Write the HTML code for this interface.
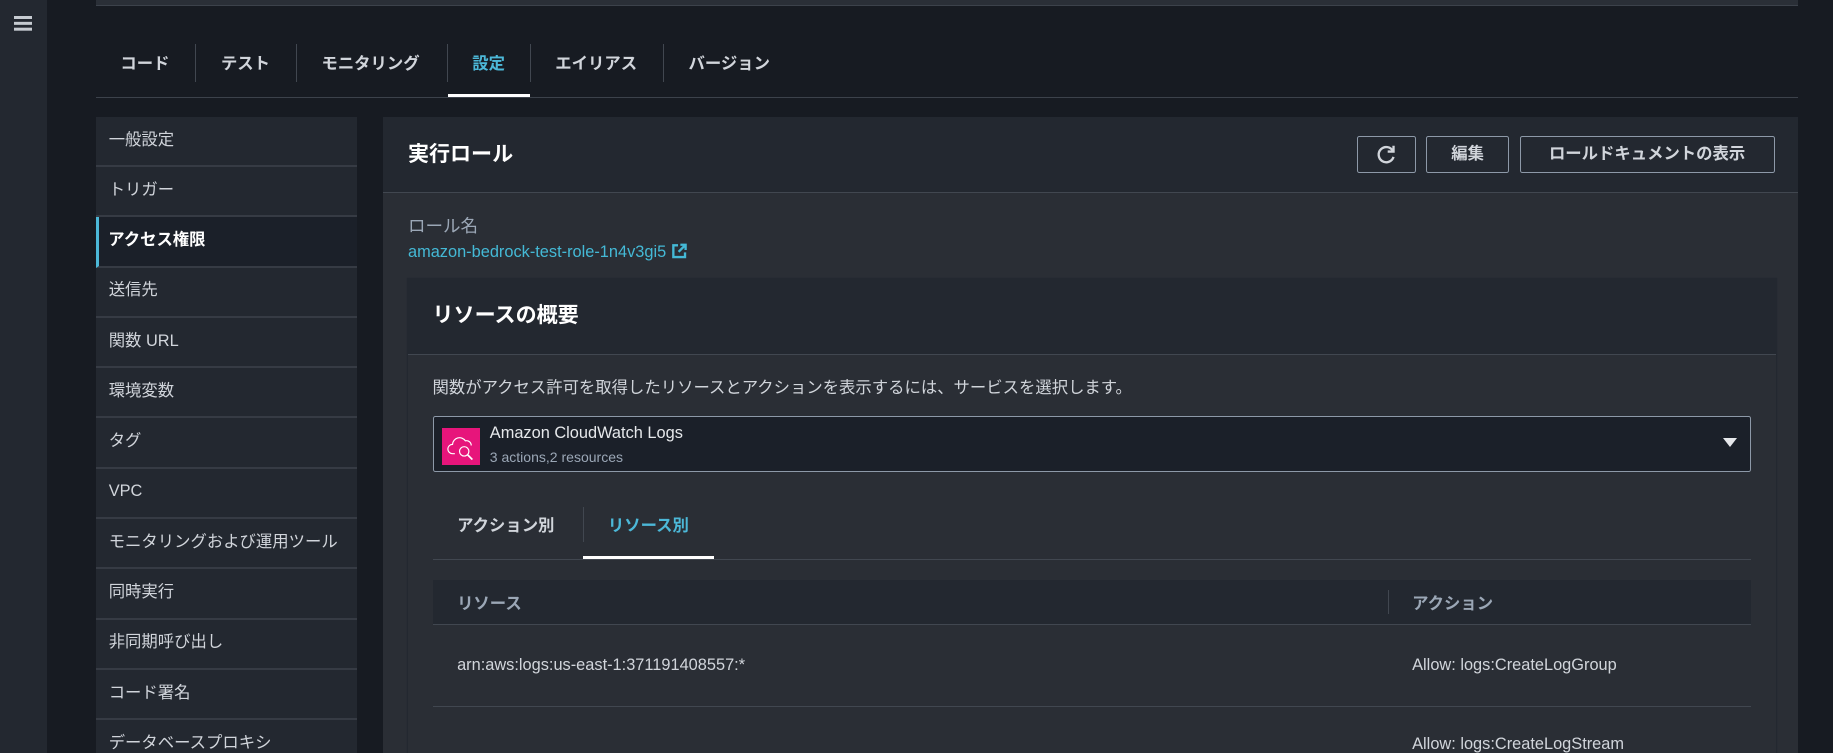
<!DOCTYPE html><html><head><meta charset="utf-8"><style>
*{box-sizing:border-box;margin:0;padding:0}
html,body{width:1833px;height:753px;overflow:hidden;background:#171b22}
#r{zoom:1.169;width:1568px;height:644px;position:relative;font-family:"Liberation Sans","Noto Sans CJK JP",sans-serif;color:#d1d5db;font-size:14px}
.a{position:absolute}
.b{font-weight:bold}
.m div{height:43px;background:#232830;border-bottom:2px solid #363b44;padding:10px 11px;line-height:20px}
</style></head><body><div id="r">
<div class="a" style="left:0;top:0;width:40px;height:644px;background:#232830"></div>
<div class="a" style="left:12px;top:14px;width:15px;height:2px;background:#c6cbd1;box-shadow:0 5px 0 #c6cbd1,0 10px 0 #c6cbd1"></div>
<div class="a" style="left:82px;top:0;width:1456px;height:5px;background:#2a2f37;border-bottom:1px solid #3c424b"></div>
<div class="a b" style="left:103px;top:43px">コード</div>
<div class="a b" style="left:189px;top:43px">テスト</div>
<div class="a b" style="left:275px;top:43px">モニタリング</div>
<div class="a b" style="left:404px;top:43px;color:#4cb8d8">設定</div>
<div class="a b" style="left:475px;top:43px">エイリアス</div>
<div class="a b" style="left:589px;top:43px">バージョン</div>
<div class="a" style="left:167px;top:38px;width:1px;height:32px;background:#414750"></div>
<div class="a" style="left:253px;top:38px;width:1px;height:32px;background:#414750"></div>
<div class="a" style="left:382px;top:38px;width:1px;height:32px;background:#414750"></div>
<div class="a" style="left:453px;top:38px;width:1px;height:32px;background:#414750"></div>
<div class="a" style="left:567px;top:38px;width:1px;height:32px;background:#414750"></div>
<div class="a" style="left:82px;top:83px;width:1456px;height:1px;background:#3c424b"></div>
<div class="a" style="left:383px;top:80px;width:70px;height:3px;background:#fff"></div>
<div class="a m" style="left:82px;top:100px;width:223px">
<div>一般設定</div>
<div>トリガー</div>
<div class="b" style="background:#1b2029;border-left:3px solid #4cb8d8;padding-left:8px;color:#fff">アクセス権限</div>
<div>送信先</div>
<div>関数 URL</div>
<div>環境変数</div>
<div>タグ</div>
<div>VPC</div>
<div>モニタリングおよび運用ツール</div>
<div>同時実行</div>
<div>非同期呼び出し</div>
<div>コード署名</div>
<div>データベースプロキシ</div>
</div>
<div class="a" style="left:328px;top:100px;width:1210px;height:544px;background:#2a2e35"></div>
<div class="a" style="left:328px;top:100px;width:1210px;height:65px;background:#232830;border-bottom:1px solid #414750"></div>
<div class="a b" style="left:349px;top:118px;font-size:18px;color:#fff">実行ロール</div>
<div class="a" style="left:1161px;top:116px;width:50px;height:32px;border:1px solid #8d99a8;border-radius:2px"></div>
<svg class="a" style="left:1177px;top:123px" width="18" height="18" viewBox="0 0 18 18"><path d="M14.5 6A6.5 6.5 0 1 0 15 11" fill="none" stroke="#d1d5db" stroke-width="2"/><path d="M15 1.5V6.5H10" fill="none" stroke="#d1d5db" stroke-width="2"/></svg>
<div class="a b" style="left:1220px;top:116px;width:71px;height:32px;border:1px solid #8d99a8;border-radius:2px;text-align:center;line-height:30px">編集</div>
<div class="a b" style="left:1300px;top:116px;width:218px;height:32px;border:1px solid #8d99a8;border-radius:2px;text-align:center;line-height:30px">ロールドキュメントの表示</div>
<div class="a" style="left:349px;top:182px;font-size:15px;color:#9ba7b6">ロール名</div>
<div class="a" style="left:349px;top:208px;color:#44b9d6">amazon-bedrock-test-role-1n4v3gi5 <svg width="14" height="14" viewBox="0 0 14 14" style="vertical-align:-2px"><path d="M6 2H2V12H12V8M8 1.5H12.5V6M12.5 1.5L6.5 7.5" fill="none" stroke="#44b9d6" stroke-width="2"/></svg></div>
<div class="a" style="left:349px;top:239px;width:1170px;height:405px;background:#2a2e35;box-shadow:0 0 0 1px #232830"></div>
<div class="a" style="left:349px;top:239px;width:1170px;height:65px;background:#232830;border-bottom:1px solid #414750"></div>
<div class="a b" style="left:370px;top:256px;font-size:18px;color:#fff">リソースの概要</div>
<div class="a" style="left:370px;top:320px">関数がアクセス許可を取得したリソースとアクションを表示するには、サービスを選択します。</div>
<div class="a" style="left:370px;top:356px;width:1128px;height:48px;background:#1b2029;border:1px solid #8d99a8;border-radius:2px"></div>
<div class="a" style="left:378px;top:366px;width:33px;height:32px;background:#e7157b"></div>
<svg class="a" style="left:378px;top:366px" width="33" height="32" viewBox="0 0 33 32"><path d="M11 22H9a4 4 0 0 1 0-8 6 6 0 0 1 11-3 4 4 0 0 1 5 4" fill="none" stroke="#fff" stroke-width="1"/><circle cx="19" cy="20" r="4" fill="none" stroke="#fff"/><path d="M22 23L26 27" stroke="#fff" stroke-width="1.5"/></svg>
<div class="a" style="left:419px;top:363px;color:#e6e8eb">Amazon CloudWatch Logs</div>
<div class="a" style="left:419px;top:384px;font-size:12px;color:#9ba7b6">3 actions,2 resources</div>
<div class="a" style="left:1474px;top:375px;width:0;height:0;border-left:6px solid transparent;border-right:6px solid transparent;border-top:8px solid #e6e8eb"></div>
<div class="a b" style="left:391px;top:438px">アクション別</div>
<div class="a" style="left:499px;top:434px;width:1px;height:30px;background:#414750"></div>
<div class="a b" style="left:520px;top:438px;color:#4cb8d8">リソース別</div>
<div class="a" style="left:370px;top:478px;width:1128px;height:1px;background:#414750"></div>
<div class="a" style="left:499px;top:476px;width:112px;height:2px;background:#fff"></div>
<div class="a" style="left:370px;top:496px;width:1128px;height:148px;background:#2a2e35"></div>
<div class="a" style="left:370px;top:496px;width:1128px;height:39px;background:#232830;border-bottom:1px solid #414750"></div>
<div class="a b" style="left:391px;top:505px;color:#9ba7b6">リソース</div>
<div class="a" style="left:1187px;top:505px;width:1px;height:20px;background:#414750"></div>
<div class="a b" style="left:1208px;top:505px;color:#9ba7b6">アクション</div>
<div class="a" style="left:391px;top:561px">arn:aws:logs:us-east-1:371191408557:*</div>
<div class="a" style="left:1208px;top:561px">Allow: logs:CreateLogGroup</div>
<div class="a" style="left:370px;top:604px;width:1128px;height:1px;background:#414750"></div>
<div class="a" style="left:1208px;top:629px">Allow: logs:CreateLogStream</div>
</div></body></html>
